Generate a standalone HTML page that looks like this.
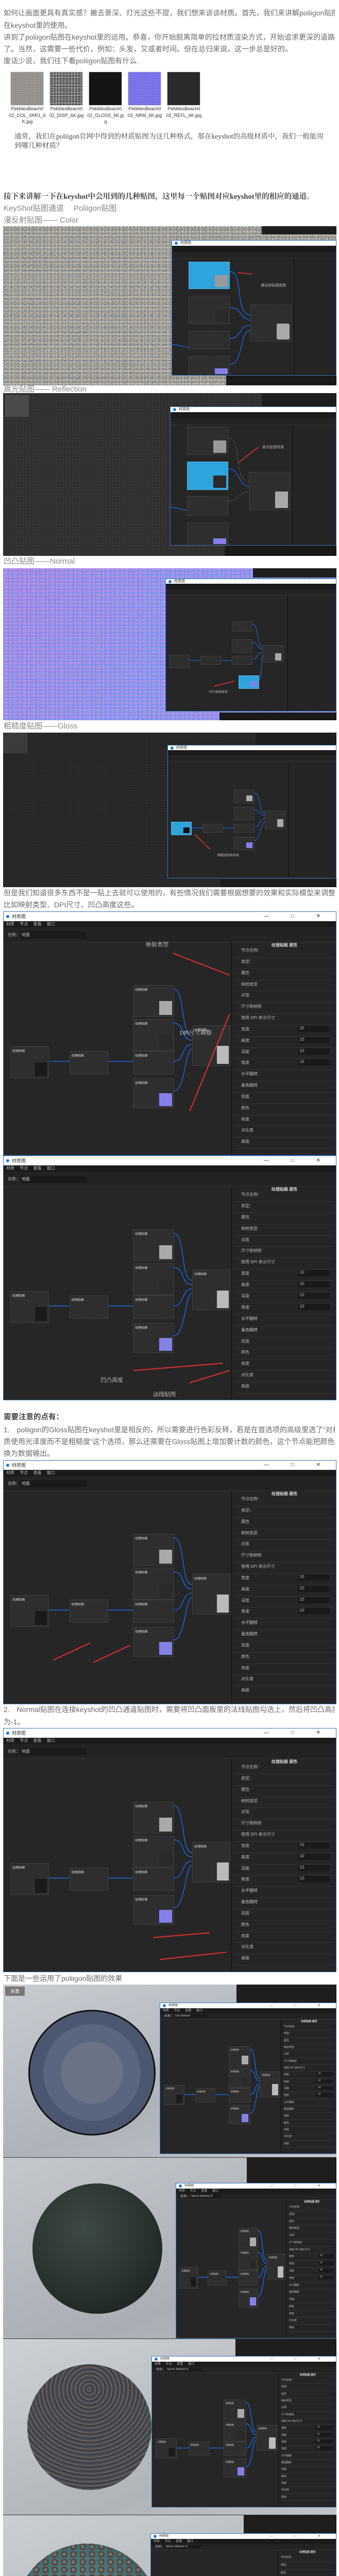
<!DOCTYPE html>
<html><head><meta charset="utf-8">
<style>
*{margin:0;padding:0;box-sizing:border-box}
body{width:658px;height:5309px;background:#fff;position:relative;overflow:hidden}
#wrap{position:absolute;left:0;top:0;width:658px;height:5309px;overflow:hidden;font-family:"Liberation Sans","Noto Sans CJK SC",sans-serif;color:#666}
.t{position:absolute;left:7px;width:644px;font-size:14px;line-height:22px;height:22px;white-space:nowrap;color:#6a6a6a;overflow:hidden}
.j{width:643px;text-align:justify;text-align-last:justify}
.b{font-weight:bold;color:#444}
.a{position:absolute;overflow:hidden}
.thumb{position:absolute;top:140px;width:63px;height:64px;box-shadow:0 0 2px #999}
.cap{position:absolute;top:205px;width:72px;font-size:9px;line-height:12.5px;text-align:center;color:#333}
.win{position:absolute;background:#262626;border:1px solid #3b74b8;overflow:hidden}
.win .tt{position:absolute;left:0;right:0;top:0;background:#fff;font-size:7px;color:#333;padding-left:16px;overflow:hidden}
.win .tt:before{content:"";position:absolute;left:5px;top:50%;width:6px;height:6px;margin-top:-3px;border-radius:50%;background:#1a7ae0}
.win .mn{position:absolute;left:0;right:0;background:#1b1b1b;color:#bbb;overflow:hidden;white-space:nowrap}
.win .tl{position:absolute;left:0;right:0;background:#232323;border-bottom:1px solid #333;overflow:hidden;white-space:nowrap}
.win .pn{position:absolute;right:0;bottom:0;background:#252525;border-left:2px solid #1a1a1a;overflow:hidden}
.nd{position:absolute;background:#2f2f2f;border:1px solid #3e3e3e;background-image:repeating-linear-gradient(45deg,#333 0 1px,#2c2c2c 1px 3px);overflow:hidden}
.nd.bl{background:#2ea3dc;border-color:#59b8e6}
.nd i{position:absolute;right:3px;bottom:3px;width:32%;height:45%}
.row{position:absolute;height:1px;background:#333}
.pl{position:absolute;color:#bbb;white-space:nowrap}
.tab{position:absolute;background:#1e1e1e}
svg{position:absolute;left:0;top:0}
.lab{position:absolute;color:#ddd;white-space:nowrap;font-family:"Liberation Serif","Noto Serif CJK SC",serif}
</style></head><body><div id="wrap">

<div class="t j" style="top:14px">如何让画面更具有真实感？撇去景深、灯光这些不提，我们想来谈谈材质。首先，我们来讲解poliigon贴图</div>
<div class="t" style="top:38px">在keyshot里的使用。</div>
<div class="t j" style="top:61px">讲到了poliigon贴图在keyshot里的运用。恭喜，你开始脱离简单的拉材质渲染方式，开始追求更深的道路</div>
<div class="t" style="top:84px">了。当然，这需要一些代价，例如：头发，又或者时间。但在总归来说，这一步总是好的。</div>
<div class="t" style="top:107px">废话少说，我们往下看poliigon贴图有什么.</div>

<div class="thumb" style="left:21px;background:#9b9894;background-image:radial-gradient(#8a8682 1px,transparent 1.5px);background-size:4px 4px"></div>
<div class="thumb" style="left:97px;background:#777;background-image:radial-gradient(#333 1px,transparent 2px),radial-gradient(#aaa 1px,transparent 2px);background-size:6px 5px,5px 7px"></div>
<div class="thumb" style="left:173px;background:#151515"></div>
<div class="thumb" style="left:249px;background:#7c78ec;background-image:radial-gradient(#6f6be0 1px,transparent 2px);background-size:5px 5px"></div>
<div class="thumb" style="left:325px;background:#2a2a2a"></div>
<div class="cap" style="left:17px">PebblesBeach0<br>02_COL_VAR1_6<br>K.jpg</div>
<div class="cap" style="left:93px">PebblesBeach0<br>02_DISP_6K.jpg</div>
<div class="cap" style="left:169px">PebblesBeach0<br>02_GLOSS_6K.jp<br>g</div>
<div class="cap" style="left:245px">PebblesBeach0<br>02_NRM_6K.jpg</div>
<div class="cap" style="left:321px">PebblesBeach0<br>02_REFL_6K.jpg</div>

<div class="t" style="top:254px;left:28px;width:625px;font-size:13.5px;color:#444;font-family:'Liberation Serif','Noto Serif CJK SC',serif">通常，我们在poliigon官网中得到的材质贴图为这几种格式，那在keyshot的高级材质中，我们一般能用</div>
<div class="t" style="top:272px;left:28px;width:625px;font-size:13.5px;color:#444;font-family:'Liberation Serif','Noto Serif CJK SC',serif">到哪几种材质？</div>

<div class="t b" style="top:371px;font-size:14.5px;font-family:'Liberation Serif','Noto Serif CJK SC',serif">接下来讲解一下在keyshot中会用到的几种贴图，这里每一个贴图对应keyshot里的相应的通道。</div>
<div class="t" style="top:394px;font-size:15px;color:#888;width:300px">KeyShot贴图通道<span style="position:absolute;left:136px">Poliigon贴图</span></div>
<div class="t" style="top:417px;font-size:15px;color:#888">漫反射贴图—— Color</div>

<div class="a" style="left:6px;top:439px;width:647px;height:309px;background:#aaa497;background-image:radial-gradient(circle at 30% 40%,#7f8897 1.3px,transparent 2.2px),radial-gradient(circle at 70% 20%,#cbc5b7 1.2px,transparent 2.2px),radial-gradient(circle at 50% 70%,#8f8a80 1.6px,transparent 2.6px),radial-gradient(circle at 20% 80%,#6f7a8a 1.1px,transparent 2px);background-size:7px 6px,5px 8px,11px 9px,13px 11px">
 <div class="tab" style="left:502px;top:0;width:145px;height:16px"></div>
 <div class="tab" style="left:433px;top:280px;width:214px;height:29px;background:#1a1a1a"></div>
</div>
<div class="win" style="left:333px;top:466px;width:320px;height:263px">
 <div class="tt" style="height:10px;line-height:10px">材质图</div>
 <div class="mn" style="top:10px;height:12px"></div>
 <div class="tl" style="top:22px;height:13px"></div>
 <div class="pn" style="top:35px;width:82px"></div>
 <div class="nd bl" style="left:32px;top:41px;width:80px;height:53px"><i style="background:#999"></i></div>
 <div class="nd" style="left:32px;top:107px;width:80px;height:55px"><i style="background:#2a2a2a"></i></div>
 <div class="nd" style="left:32px;top:175px;width:80px;height:36px"></div>
 <div class="nd" style="left:32px;top:224px;width:80px;height:39px"><i style="background:#8580e8;height:30%"></i></div>
 <div class="nd" style="left:152px;top:124px;width:80px;height:72px"><i style="background:#aaa;border-radius:3px"></i></div>
 <svg width="320" height="263"><g fill="none" stroke="#1764e0" stroke-width="1.5"><path d="M112 60C140 60 120 140 152 145"/><path d="M112 130C135 130 130 150 152 155"/><path d="M112 190C135 190 130 162 152 165"/><path d="M112 240C140 240 130 172 152 175"/><path d="M0 202C15 202 20 207 32 207"/></g><path d="M155 65l-28 -3" stroke="#e33" stroke-width="1.5"/></svg>
 <div class="lab" style="left:172px;top:82px;font-size:7px">漫反射贴图效果</div>
</div>

<div class="t" style="top:745px;font-size:15px;color:#888">高光贴图—— Reflection</div>

<div class="a" style="left:6px;top:763px;width:647px;height:316px;background:#303030;background-image:radial-gradient(#383838 1px,transparent 2px);background-size:6px 6px">
 <div class="tab" style="left:502px;top:0;width:145px;height:27px"></div>
 <div style="position:absolute;left:4px;top:4px;width:46px;height:42px;background:#555;opacity:.7"></div>
 <div class="tab" style="left:430px;top:285px;width:217px;height:31px;background:#1a1a1a"></div>
</div>
<div class="win" style="left:330px;top:789px;width:323px;height:270px">
 <div class="tt" style="height:10px;line-height:10px">材质图</div>
 <div class="mn" style="top:10px;height:12px"></div>
 <div class="tl" style="top:22px;height:13px"></div>
 <div class="pn" style="top:35px;width:85px"></div>
 <div class="nd" style="left:32px;top:38px;width:80px;height:55px"><i style="background:#999"></i></div>
 <div class="nd bl" style="left:32px;top:106px;width:80px;height:55px"><i style="background:#2a2a2a"></i></div>
 <div class="nd" style="left:32px;top:173px;width:80px;height:38px"></div>
 <div class="nd" style="left:32px;top:224px;width:80px;height:46px"><i style="background:#8580e8;height:25%"></i></div>
 <div class="nd" style="left:152px;top:126px;width:80px;height:74px"><i style="background:#aaa"></i></div>
 <svg width="323" height="270"><g fill="none" stroke-width="1.5"><path d="M112 120C135 120 130 150 152 155" stroke="#1764e0"/><path d="M0 195C15 195 20 200 32 200" stroke="#1764e0"/><path d="M112 60C140 60 120 140 152 145" stroke="#555" stroke-dasharray="3 2"/><path d="M112 183C135 183 130 165 152 165" stroke="#555" stroke-dasharray="3 2"/></g><path d="M170 78l-38 30" stroke="#e33" stroke-width="1.5"/></svg>
 <div class="lab" style="left:178px;top:73px;font-size:7px">高光贴图效果</div>
</div>

<div class="t" style="top:1079px;font-size:15px;color:#888">凹凸贴图——Normal</div>

<div class="a" style="left:6px;top:1103px;width:647px;height:295px;background:#8f86e8;background-image:radial-gradient(circle at 30% 30%,#d08ee0 1px,transparent 2.5px),radial-gradient(circle at 60% 70%,#79b6e8 1px,transparent 2.5px),linear-gradient(120deg,#9a7fe6,#7f8ff0 50%,#a27ee0);background-size:6px 7px,9px 5px,100% 100%">
 <div class="tab" style="left:485px;top:0;width:162px;height:18px"></div>
 <div class="tab" style="left:420px;top:280px;width:227px;height:15px;background:#1a1a1a"></div>
</div>
<div class="win" style="left:321px;top:1123px;width:332px;height:258px">
 <div class="tt" style="height:9px;line-height:9px">材质图</div>
 <div class="mn" style="top:9px;height:10px"></div>
 <div class="tl" style="top:19px;height:12px"></div>
 <div class="pn" style="top:31px;width:95px"></div>
 <div class="nd" style="left:128px;top:82px;width:40px;height:20px"></div>
 <div class="nd" style="left:128px;top:117px;width:40px;height:26px"></div>
 <div class="nd" style="left:6px;top:147px;width:40px;height:26px"></div>
 <div class="nd" style="left:67px;top:149px;width:40px;height:17px"></div>
 <div class="nd" style="left:128px;top:149px;width:40px;height:17px"></div>
 <div class="nd bl" style="left:141px;top:187px;width:40px;height:26px"><i style="background:#8580e8"></i></div>
 <div class="nd" style="left:188px;top:128px;width:40px;height:34px"><i style="background:#aaa"></i></div>
 <svg width="332" height="258"><g fill="none" stroke="#1764e0" stroke-width="1.2"><path d="M168 88C180 88 176 130 188 132"/><path d="M168 123C178 123 178 136 188 136"/><path d="M46 158L67 158M107 158L128 158"/><path d="M168 156C178 156 178 142 188 142"/><path d="M181 195C186 195 185 150 188 148"/></g><path d="M132 198l-38 10" stroke="#e33" stroke-width="1.5"/></svg>
 <div class="lab" style="left:84px;top:214px;font-size:6px">凹凸贴图效果</div>
</div>

<div class="t" style="top:1399px;font-size:15px;color:#888">粗糙度贴图——Gloss</div>

<div class="a" style="left:6px;top:1422px;width:647px;height:300px;background:#262626;background-image:radial-gradient(#2e2e2e 1px,transparent 2px);background-size:5px 5px">
 <div class="tab" style="left:490px;top:0;width:157px;height:26px"></div>
 <div style="position:absolute;left:0;top:0;width:48px;height:40px;background:#444;opacity:.7"></div>
 <div class="tab" style="left:422px;top:285px;width:225px;height:15px;background:#1a1a1a"></div>
</div>
<div class="win" style="left:325px;top:1446px;width:328px;height:259px">
 <div class="tt" style="height:9px;line-height:9px">材质图</div>
 <div class="mn" style="top:9px;height:10px"></div>
 <div class="tl" style="top:19px;height:12px"></div>
 <div class="pn" style="top:31px;width:93px"></div>
 <div class="nd" style="left:128px;top:86px;width:40px;height:26px"><i style="background:#aaa"></i></div>
 <div class="nd" style="left:128px;top:119px;width:40px;height:26px"></div>
 <div class="nd bl" style="left:6px;top:148px;width:40px;height:26px"><i style="background:#111"></i></div>
 <div class="nd" style="left:67px;top:152px;width:40px;height:17px"></div>
 <div class="nd" style="left:128px;top:152px;width:40px;height:17px"></div>
 <div class="nd" style="left:128px;top:177px;width:40px;height:26px"><i style="background:#8580e8"></i></div>
 <div class="nd" style="left:188px;top:126px;width:40px;height:36px"><i style="background:#aaa"></i></div>
 <svg width="328" height="259"><g fill="none" stroke="#1764e0" stroke-width="1.2"><path d="M168 92C180 92 176 130 188 132"/><path d="M168 125C178 125 178 136 188 136"/><path d="M46 160L67 160M107 160L128 160"/><path d="M168 158C178 158 178 142 188 142"/><path d="M168 185C178 185 180 150 188 148"/></g><path d="M52 172l30 30" stroke="#e33" stroke-width="1.5"/></svg>
 <div class="lab" style="left:96px;top:208px;font-size:6px">粗糙度贴图效果</div>
</div>

<div class="t j" style="top:1722px">但是我们知道很多东西不是一贴上去就可以使用的，有些情况我们需要根据想要的效果和实际模型来调整。</div>
<div class="t" style="top:1745px">比如映射类型、DPI尺寸、凹凸高度这些。</div>

<div id="A" class="win" style="left:6px;top:1769px;width:647px;height:474px"></div>
<div id="B" class="win" style="left:6px;top:2243px;width:647px;height:475px"></div>

<div class="t b" style="top:2740px;font-size:14.5px">需要注意的点有：</div>
<div class="t j" style="top:2764px">1.　poliigon的Gloss贴图在keyshot里是相反的，所以需要进行色彩反转，若是在首选项的高级里选了“对材</div>
<div class="t j" style="top:2787px">质使用光泽度而不是粗糙度”这个选项，那么还需要在Gloss贴图上增加要计数的颜色，这个节点能把颜色转</div>
<div class="t" style="top:2810px">换为数据输出。</div>

<div id="C" class="win" style="left:6px;top:2834px;width:647px;height:474px"></div>

<div class="t j" style="top:3307px">2.　Normal贴图在连接keyshot的凹凸通道贴图时，需要将凹凸面板里的法线贴图勾选上，然后将凹凸高度调</div>
<div class="t" style="top:3331px">为-1。</div>

<div id="D" class="win" style="left:6px;top:3354px;width:647px;height:474px"></div>

<div class="t" style="top:3829px">下面是一些运用了poliigon贴图的效果</div>

<div class="a" style="left:6px;top:3852px;width:647px;height:335px;background:linear-gradient(160deg,#c8ccd1,#aeb3ba 60%,#c2c6cb)">
 <div style="position:absolute;left:49px;top:49px;width:247px;height:244px;border-radius:50%;background:radial-gradient(circle at 50% 50%,#6a7286 0 35%,#5a6580 36% 55%,#4b5670 56% 80%,#2b3040 82%);border:3px solid #111"></div>
 <div style="position:absolute;left:4px;top:4px;width:38px;height:18px;background:#777;color:#eee;font-size:9px;line-height:18px;text-align:center">采集</div>
 <div class="tab" style="left:453px;top:0;width:194px;height:35px"></div>
</div>
<div id="E" class="win" style="left:310px;top:3887px;width:343px;height:294px"></div>

<div class="a" style="left:6px;top:4187px;width:647px;height:352px;background:linear-gradient(160deg,#c4c8cd,#a9aeb4 70%,#b8bcc1);border-top:1px solid #333">
 <div style="position:absolute;left:57px;top:50px;width:252px;height:253px;border-radius:50%;background:radial-gradient(circle at 40% 35%,#3e4a46,#27302d 60%,#151a18)"></div>
 <div class="tab" style="left:473px;top:0;width:174px;height:50px"></div>
</div>
<div id="F" class="win" style="left:341px;top:4237px;width:312px;height:302px"></div>

<div class="a" style="left:6px;top:4539px;width:647px;height:342px;background:linear-gradient(160deg,#cdd0d4,#b0b4b9 70%,#c0c3c7);border-top:1px solid #333">
 <div style="position:absolute;left:47px;top:49px;width:241px;height:244px;border-radius:50%;background:repeating-radial-gradient(circle at 50% 20%,#4a4f58 0 3px,#6b625a 3px 5px,#3a3d44 5px 8px)"></div>
 <div class="tab" style="left:451px;top:0;width:196px;height:34px"></div>
</div>
<div id="G" class="win" style="left:294px;top:4573px;width:359px;height:294px"></div>

<div class="a" style="left:6px;top:4881px;width:647px;height:377px;background:linear-gradient(160deg,#cbced2,#aeb2b8 70%,#c0c3c7);border-top:1px solid #333">
 <div style="position:absolute;left:23px;top:55px;width:280px;height:283px;border-radius:50%;background:radial-gradient(circle at 30% 40%,#4d8088 0 3px,#6b3a2a 4px 6px,transparent 7px),radial-gradient(circle at 45% 45%,#5a8d95,#3d6b72 60%,#253d42);background-size:18px 15px,100% 100%"></div>
 <div class="tab" style="left:467px;top:0;width:180px;height:36px"></div>
</div>
<div id="H" class="win" style="left:292px;top:4917px;width:361px;height:323px"></div>

<div class="t j b" style="top:5260px;color:#666">结语：在这次的poliigon贴图讲解中，各位有没有获得想要的知识？本篇的知识点虽然很基础，但是确实</div>
<div class="t b" style="top:5282px;color:#666">迈向keyshot高级节点运用的第一步。</div>

<script>
function big(id,name,labels,arrows,small){
 var w=document.getElementById(id);var W=w.offsetWidth-2,H=w.offsetHeight-2;
 var th=small?10:18,mh=small?10:12,tlh=small?12:29;
 var top=th+mh+tlh;
 var px=Math.round(W*0.683);
 var h='<div class="tt" style="height:'+th+'px;line-height:'+th+'px;font-size:'+(small?6:9)+'px">材质图<span style="position:absolute;right:10px;letter-spacing:20px;font-size:'+(small?6:10)+'px">— □ ✕</span></div>';
 h+='<div class="mn" style="top:'+th+'px;height:'+mh+'px;font-size:'+(small?6:8)+'px;line-height:'+mh+'px;padding-left:5px;word-spacing:8px">材质 节点 查看 窗口</div>';
 h+='<div class="tl" style="top:'+(th+mh)+'px;height:'+tlh+'px;font-size:'+(small?6:8)+'px;line-height:'+tlh+'px;color:#bbb;padding-left:8px">名称：<span style="display:inline-block;width:'+(W*0.2)+'px;height:'+(tlh*0.5)+'px;background:#1a1a1a;vertical-align:middle;color:#ccc;font-size:'+(small?5:8)+'px;line-height:'+(tlh*0.5)+'px;padding-left:3px;overflow:hidden">'+name+'</span></div>';
 h+='<div class="pn" style="top:'+top+'px;width:'+(W-px)+'px">';
 var rows=['节点名称：','类型：','属性','映射类型','对准','尺寸和映射','使用 DPI 表示尺寸','宽度','高度','深度','角度','水平翻转','垂直翻转','双面','颜色','亮度','对比度','高级'];
 var fs=small?5:8;var rh=(H-top-20)/rows.length;
 for(var i=0;i<rows.length;i++){h+='<div class="pl" style="left:'+(small?5:18)+'px;top:'+(10+i*rh)+'px;font-size:'+fs+'px">'+rows[i]+'</div>';
  if(i>6&&i<11)h+='<div style="position:absolute;left:'+((W-px)*0.63)+'px;top:'+(9+i*rh)+'px;width:'+((W-px)*0.3)+'px;height:'+(rh*0.55)+'px;background:#1a1a1a;color:#bbb;font-size:'+fs+'px;padding-left:3px;overflow:hidden">10</div>';
  h+='<div class="row" style="left:5px;right:5px;top:'+(10+(i+1)*rh-3)+'px"></div>';}
 h+='<div style="position:absolute;left:'+((W-px)*0.35)+'px;top:0;width:'+((W-px)*0.3)+'px;height:'+(rh*0.8)+'px;font-size:'+fs+'px;color:#ddd;font-weight:bold;text-align:center;white-space:nowrap;overflow:hidden">纹理贴图 属性</div>';
 h+='</div>';
 var cw=px,ch=H-top;
 function n(x,y,ww,hh,img,bl){return '<div class="nd'+(bl?' bl':'')+'" style="left:'+x*cw+'px;top:'+(top+y*ch)+'px;width:'+ww*cw+'px;height:'+hh*ch+'px">'+(img?'<i style="background:'+img+'"></i>':'')+'<div style="position:absolute;left:3px;top:3px;font-size:'+(small?4:6)+'px;color:#ddd;white-space:nowrap">纹理贴图</div></div>';}
 h+=n(.57,.2,.18,.15,'#aaa');h+=n(.57,.36,.18,.15,'#2a2a2a');h+=n(.03,.49,.17,.15,'#1a1a1a');h+=n(.29,.51,.17,.11);h+=n(.57,.51,.18,.11);h+=n(.57,.64,.18,.14,'#8580e8');h+=n(.83,.39,.17,.19,'#bbb');
 var sv='<svg width="'+W+'" height="'+H+'" viewBox="0 0 100 100" preserveAspectRatio="none"><g transform="translate(0 '+(top/H*100)+') scale(0.683 '+(ch/H)+')" fill="none" stroke="#1764e0" stroke-width="1.6">';
 var ps=['M75 22C80 22 78 44 83 44','M75 38C80 38 78 46 83 46','M20 56L29 56M46 56L57 56','M75 56C80 56 78 48 83 48','M75 70C80 70 80 50 83 50'];
 for(var k=0;k<ps.length;k++)sv+='<path vector-effect="non-scaling-stroke" d="'+ps[k]+'"/>';
 sv+='</g><g stroke="#e62e2e" stroke-width="2" fill="none">';
 for(k=0;k<arrows.length;k++)sv+='<path vector-effect="non-scaling-stroke" d="'+arrows[k]+'"/>';
 sv+='</g></svg>';h+=sv;
 for(k=0;k<labels.length;k++)h+='<div class="lab" style="left:'+labels[k][0]+'px;top:'+labels[k][1]+'px;font-size:'+(small?6:11)+'px">'+labels[k][2]+'</div>';
 w.innerHTML=h;
}
big('A','地面',[[276,55,'映射类型'],[342,226,'DPI尺寸调整']],['M51 17L68 26','M56 82L68 42']);
big('B','地面',[[188,426,'凹凸高度'],[290,454,'法线贴图']],['M39 88L66 85','M56 93L68 88']);
big('C','地面',[],['M15 82L26 75','M27 83L38 76']);
big('D','地面',[],['M45 86L62 84','M47 95L67 92']);
big('E','Disc Material',[],[],true);
big('F','Sphere Material #1',[],[],true);
big('G','Sphere Material #1',[],[],true);
big('H','Sphere Material #1',[],[],true);
</script>
</div></body></html>
